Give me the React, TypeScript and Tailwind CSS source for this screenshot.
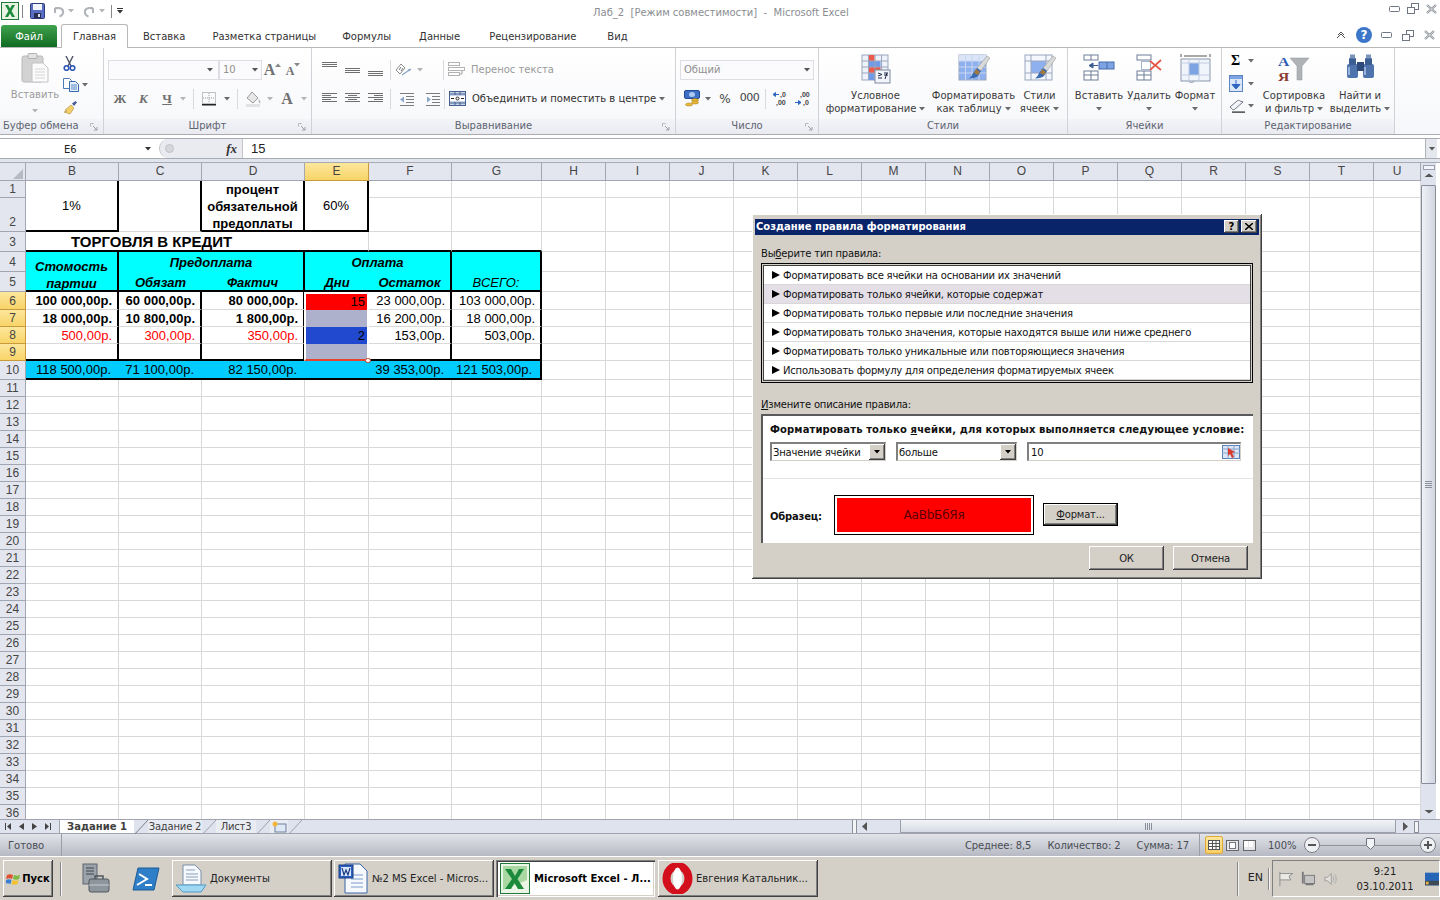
import type { ReactNode } from 'react'

const ui = "font-['DejaVu_Sans',sans-serif] text-[10px]"
const sheetFont = "font-['Liberation_Sans',sans-serif]"
const serifFont = "font-['Liberation_Serif',serif]"

const colLetters = ['B', 'C', 'D', 'E', 'F', 'G', 'H', 'I', 'J', 'K', 'L', 'M', 'N', 'O', 'P', 'Q', 'R', 'S', 'T', 'U']
const colWidths = [26, 93, 83, 103, 64, 83, 90, 64, 64, 64, 64, 64, 64, 64, 64, 64, 64, 64, 64, 64, 47]

function Caret({ color = '#6a6a6a', className = '' }: { color?: string; className?: string }) {
  return (
    <svg width="6" height="4" viewBox="0 0 6 4" className={`inline-block shrink-0 ${className}`}>
      <path d="M0 0h6L3 3.5z" fill={color} />
    </svg>
  )
}

function Launcher() {
  return (
    <svg width="8" height="8" viewBox="0 0 8 8">
      <path d="M0.5 0.5h3M0.5 0.5v3" stroke="#b5b8bf" fill="none" />
      <path d="M3 3l4 4M7 4v3H4" stroke="#9ca0a8" fill="none" />
    </svg>
  )
}

function Sep({ h = 'h-[20px]', ml = '' }: { h?: string; ml?: string }) {
  return <div className={`w-px bg-[#d8dae0] shrink-0 ${h} ${ml}`} />
}

function Cell({ w, children }: { w: string; children?: ReactNode }) {
  return <div className={`${w} h-full flex items-center justify-center shrink-0`}>{children}</div>
}

function Lines({ kind }: { kind: 'left' | 'center' | 'right' }) {
  const rows = [15, 9, 15, 9, 15]
  return (
    <svg width="15" height="11" viewBox="0 0 15 11">
      {rows.map((w, i) => {
        const x = kind === 'left' ? 0 : kind === 'right' ? 15 - w : (15 - w) / 2
        return <rect key={i} x={x} y={i * 2} width={w} height="1" fill="#6f6f6f" />
      })}
    </svg>
  )
}

function VLines({ offset }: { offset: number }) {
  return (
    <svg width="15" height="14" viewBox="0 0 15 14">
      {[0, 1, 2].map((i) => (
        <rect key={i} x="0" y={offset + i * 2} width="15" height="1" fill="#6f6f6f" />
      ))}
    </svg>
  )
}

function Indent({ dir }: { dir: 'l' | 'r' }) {
  return (
    <svg width="15" height="14" viewBox="0 0 15 14">
      {[1, 4, 7, 10, 13].map((y, i) => (
        <rect key={y} x={i === 0 || i === 4 ? 1 : 7} y={y} width={i === 0 || i === 4 ? 14 : 8} height="1" fill="#7d7d7d" />
      ))}
      <path d={dir === 'l' ? 'M1 7.5l4-3v6z' : 'M6 7.5l-4-3v6z'} fill="#8aa6c8" />
    </svg>
  )
}

function ExcelLogo() {
  return (
    <svg width="18" height="18" viewBox="0 0 18 18">
      <rect x="0.5" y="0.5" width="17" height="17" fill="#e8f3e4" stroke="#1f7a3a" />
      <path d="M4 3h3l2 3.5L11 3h3l-3.5 6 3.5 6h-3l-2-3.5L7 15H4l3.5-6z" fill="#1c8a3b" />
    </svg>
  )
}

function SaveIcon() {
  return (
    <svg width="15" height="16" viewBox="0 0 15 16">
      <rect x="0.5" y="0.5" width="14" height="15" rx="1" fill="#5a6fc4" stroke="#2c3a7c" />
      <rect x="3" y="1" width="9" height="6" fill="#f2f4fb" />
      <rect x="4" y="10" width="7" height="5" fill="#2a2f50" />
      <rect x="8" y="11" width="2" height="3" fill="#d8dcf0" />
    </svg>
  )
}

function UndoIcon({ flip }: { flip?: boolean }) {
  return (
    <svg width="13" height="13" viewBox="0 0 13 13" className={flip ? '-scale-x-100' : ''}>
      <path d="M3 8V3M3 3h5M3.5 3.5C7 2 12 3.5 11 8c-.4 1.8-2 3-3.5 3.5" stroke="#b1b4ba" strokeWidth="2" fill="none" />
    </svg>
  )
}

function PasteIcon() {
  return (
    <svg width="28" height="32" viewBox="0 0 28 32">
      <rect x="1" y="3" width="21" height="26" rx="2" fill="#d2d2d2" stroke="#b9b9b9" />
      <rect x="7" y="0.5" width="9" height="5" rx="1" fill="#e3e3e3" stroke="#b0b0b0" />
      <path d="M11 10h11l5 5v14H11z" fill="#fbfbfb" stroke="#c3c3c3" />
      <path d="M14 16h10M14 19h10M14 22h10M14 25h10" stroke="#d4d4d4" />
    </svg>
  )
}

function ScissorsIcon() {
  return (
    <svg width="13" height="15" viewBox="0 0 13 15">
      <path d="M3 0l5 10M10 0L5 10" stroke="#4b5464" strokeWidth="1.4" />
      <circle cx="3.5" cy="12" r="2.3" fill="none" stroke="#2d55b6" strokeWidth="1.6" />
      <circle cx="9.5" cy="12" r="2.3" fill="none" stroke="#2d55b6" strokeWidth="1.6" />
    </svg>
  )
}

function CopyIcon() {
  return (
    <svg width="16" height="14" viewBox="0 0 16 14">
      <path d="M0.5 0.5h6l2 2v8h-8z" fill="#fff" stroke="#4d79b9" />
      <path d="M6.5 3.5h6l3 3v7h-9z" fill="#e8f0fb" stroke="#3569b0" />
      <path d="M8 7h6M8 9h6M8 11h6" stroke="#5d8ac8" />
    </svg>
  )
}

function PainterIcon() {
  return (
    <svg width="16" height="15" viewBox="0 0 16 15">
      <path d="M8 5l3 3-4 6-6-2 3-1-2-1z" fill="#f4d06a" stroke="#a98b37" strokeWidth="0.6" />
      <path d="M9 3.5l3.5-2.5 1.5 1.5-3 3.5z" fill="#4a5f96" />
    </svg>
  )
}

function BordersIcon() {
  return (
    <svg width="15" height="14" viewBox="0 0 15 14">
      <rect x="0.5" y="0.5" width="13" height="11" fill="none" stroke="#8a8a8a" strokeDasharray="1 1" />
      <path d="M7 1v10M1 6h12" stroke="#9a9a9a" strokeDasharray="1 1" />
      <rect x="0" y="12" width="14" height="1.5" fill="#222" />
    </svg>
  )
}

function FillIcon() {
  return (
    <svg width="17" height="16" viewBox="0 0 17 16">
      <path d="M7 1l6 6-5 5-6-5z" fill="#e7e7e7" stroke="#9a9a9a" />
      <path d="M14 8c1 2 2 3 1 4s-2-1-1-4z" fill="#b5b5b5" />
      <rect x="1" y="13" width="14" height="3" fill="#e3e3e3" />
    </svg>
  )
}

function OrientIcon() {
  return (
    <svg width="18" height="14" viewBox="0 0 18 14">
      <path d="M1 7l5-6 4 4-5 6z" fill="none" stroke="#8d8d8d" />
      <path d="M4 7l2-3M6 8l2-3" stroke="#777" />
      <path d="M7 12L16 6" stroke="#88a3c7" strokeWidth="1.2" />
      <path d="M16 6l-3 0 1.5 2.5z" fill="#88a3c7" />
    </svg>
  )
}

function WrapIcon() {
  return (
    <svg width="17" height="15" viewBox="0 0 17 15">
      <rect x="0.5" y="0.5" width="11" height="3" fill="#fff" stroke="#b3b3b3" />
      <rect x="0.5" y="5.5" width="16" height="3" fill="#fff" stroke="#b3b3b3" />
      <rect x="0.5" y="10.5" width="11" height="3" fill="#fff" stroke="#b3b3b3" />
      <path d="M14 9v3h-2" stroke="#a0a0a0" fill="none" />
    </svg>
  )
}

function MergeIcon() {
  return (
    <svg width="17" height="15" viewBox="0 0 17 15">
      <rect x="0.5" y="0.5" width="16" height="14" fill="#c6d3ea" stroke="#45618f" />
      <rect x="1" y="5" width="15" height="5" fill="#fff" />
      <path d="M1 3h15M1 12h15M6 1v3M11 1v3M6 11v3M11 11v3" stroke="#45618f" />
      <path d="M2 7.5h3M12 7.5h3" stroke="#222" />
      <circle cx="8.5" cy="7.5" r="1.5" fill="none" stroke="#222" />
    </svg>
  )
}

function CurrencyIcon() {
  return (
    <svg width="17" height="17" viewBox="0 0 17 17">
      <rect x="0.5" y="0.5" width="15" height="8" rx="1.5" fill="#3d6fc4" stroke="#1f4a94" />
      <ellipse cx="8" cy="4.5" rx="3" ry="2.5" fill="#a9c9f2" />
      <ellipse cx="11" cy="10" rx="3.5" ry="1.5" fill="#e9b93a" stroke="#a47a16" strokeWidth="0.5" />
      <ellipse cx="11" cy="12.5" rx="3.5" ry="1.5" fill="#e9b93a" stroke="#a47a16" strokeWidth="0.5" />
      <ellipse cx="5" cy="14.5" rx="3.5" ry="1.5" fill="#e9b93a" stroke="#a47a16" strokeWidth="0.5" />
    </svg>
  )
}

function DecimalIcon({ inc }: { inc?: boolean }) {
  return (
    <svg width="18" height="17" viewBox="0 0 18 17">
      <text x={inc ? 10 : 7} y="7" fontSize="7" fontWeight="600" fill="#444" fontFamily="Liberation Sans">{inc ? ',0' : ',00'}</text>
      <text x={inc ? 6 : 10} y="15" fontSize="7" fontWeight="600" fill="#444" fontFamily="Liberation Sans">{inc ? ',00' : ',0'}</text>
      <path d={inc ? 'M3 4.5h6M3 4.5L5.5 2.5v4z' : 'M2 12.5h6M8 12.5L5.5 10.5v4z'} stroke="#2f66c4" fill="#2f66c4" />
    </svg>
  )
}

function CondFormatIcon() {
  return (
    <svg width="30" height="30" viewBox="0 0 30 30">
      <rect x="1" y="1" width="26" height="25" fill="#eef2fa" stroke="#9aa6bd" />
      <rect x="7.5" y="1" width="6" height="6" fill="#ef5a4a" />
      <rect x="7.5" y="7" width="12" height="6" fill="#6f9ae8" />
      <rect x="7.5" y="13" width="12" height="6" fill="#ef5a4a" />
      <rect x="7.5" y="19" width="6" height="7" fill="#6f9ae8" />
      <path d="M7.5 1v25M14 1v25M20.5 1v25M1 7h26M1 13h26M1 19h26" stroke="#9aa6bd" />
      <rect x="14" y="16" width="15" height="13" fill="#f2f5fb" stroke="#7e8aa0" />
      <path d="M17 19l4 1.5-4 1.5M17 24h4M23 19l4 0M23 21l4 0M24 25l2-6" stroke="#1e2b45" fill="none" />
    </svg>
  )
}

function Brush() {
  return (
    <g>
      <path d="M29 2l3 2-9 13-4-3z" fill="#d8d9d8" stroke="#8c8c8c" strokeWidth="0.5" />
      <path d="M19 14l4 3-3 5c-1.5 1.5-5 2.5-9 2.5 2-1.500 3-3 4-5.500z" fill="#3a6ab0" />
      <path d="M18 15l4 3-2 3-4-2z" fill="#a3793f" />
    </g>
  )
}

function TableFmtIcon() {
  return (
    <svg width="32" height="28" viewBox="0 0 32 28">
      <rect x="1" y="1" width="27" height="25" fill="#8fb0ee" stroke="#9aa6bd" />
      <rect x="1" y="1" width="27" height="6" fill="#dbe5f7" />
      <path d="M7.5 1v25M14 1v25M21 1v25M1 7h27M1 13h27M1 19h27" stroke="#c9d6ef" />
      <Brush />
    </svg>
  )
}

function CellStyleIcon() {
  return (
    <svg width="32" height="28" viewBox="0 0 32 28">
      <rect x="1" y="1" width="27" height="25" fill="#f4f7fd" stroke="#9aa6bd" />
      <rect x="7" y="7" width="15" height="12" fill="#8fb0ee" />
      <path d="M7 1v25M22 1v25M1 7h27M1 19h27" stroke="#9aa6bd" />
      <Brush />
    </svg>
  )
}

function InsertCellIcon() {
  return (
    <svg width="32" height="27" viewBox="0 0 32 27">
      <rect x="1" y="1" width="14" height="5" fill="#fff" stroke="#6f7d97" />
      <path d="M8 1v5" stroke="#6f7d97" />
      <rect x="16" y="8" width="15" height="7" fill="#7ea3e2" stroke="#466da9" />
      <path d="M24 8v7" stroke="#466da9" />
      <path d="M6 11.5h9M6 11.5l4-2.5v5z" stroke="#3c5f93" fill="#3c5f93" />
      <rect x="1" y="17" width="14" height="9" fill="#fff" stroke="#6f7d97" />
      <path d="M8 17v9M1 21h14" stroke="#6f7d97" />
    </svg>
  )
}

function DeleteCellIcon() {
  return (
    <svg width="27" height="27" viewBox="0 0 27 27">
      <rect x="1" y="1" width="14" height="5" fill="#fff" stroke="#6f7d97" />
      <rect x="5.5" y="7.5" width="9" height="8" fill="#fff" stroke="#466da9" strokeDasharray="1 1" />
      <path d="M14 7l11 9M25 6l-11 10" stroke="#e45745" strokeWidth="1.7" />
      <rect x="1" y="17" width="14" height="9" fill="#fff" stroke="#6f7d97" />
      <path d="M8 17v9M1 21h14" stroke="#6f7d97" />
    </svg>
  )
}

function FormatCellIcon() {
  return (
    <svg width="31" height="30" viewBox="0 0 31 30">
      <path d="M1 0v3M30 0v3M4 2h23" stroke="#555" />
      <rect x="1" y="5" width="29" height="22" fill="#f0f4fb" stroke="#8b97ae" />
      <rect x="9" y="9" width="10" height="12" fill="#7ea3e2" />
      <path d="M9 5v22M19 5v22M1 9h29M1 21h29" stroke="#c1cde3" />
      <path d="M9 27c0 2 5 2 5 0" stroke="#8b97ae" fill="none" />
    </svg>
  )
}

function FillDownIcon() {
  return (
    <svg width="14" height="17" viewBox="0 0 14 17">
      <rect x="0.5" y="0.5" width="13" height="16" fill="#dbe6f8" stroke="#5d85c4" />
      <rect x="1" y="1" width="12" height="3" fill="#7ea3e2" />
      <path d="M7 5v6M3 9.5h8L7 14z" stroke="#2f66c4" fill="#2f66c4" />
    </svg>
  )
}

function EraserIcon() {
  return (
    <svg width="16" height="14" viewBox="0 0 16 14">
      <path d="M1 8l7-6c1-1 2-1 3 0l3 1-8 7c-1 1-2 1-3 0z" fill="#f4f5f8" stroke="#6d7786" />
      <rect x="3" y="12.5" width="13" height="1.2" fill="#222" />
    </svg>
  )
}

function SortIcon() {
  return (
    <svg width="32" height="30" viewBox="0 0 32 30" className={serifFont}>
      <text transform="translate(0 12) scale(1.2 1)" fontSize="13" fontWeight="700" fill="#2f5fb0">A</text>
      <text transform="translate(0 27) scale(1.2 1)" fontSize="13" fontWeight="700" fill="#8c3a34">Я</text>
      <path d="M12 4h19l-7 8v14h-5v-14z" fill="#b0b3b6" stroke="#8f9195" strokeWidth="0.5" />
    </svg>
  )
}

function FindIcon() {
  return (
    <svg width="29" height="26" viewBox="0 0 29 26">
      <rect x="1" y="10" width="11" height="14" rx="2" fill="#4f73ad" />
      <rect x="17" y="10" width="11" height="14" rx="2" fill="#4f73ad" />
      <rect x="3" y="4" width="7" height="7" rx="1" fill="#3c5d92" />
      <rect x="19" y="4" width="7" height="7" rx="1" fill="#3c5d92" />
      <rect x="4" y="0.5" width="5" height="4" fill="#7a93bd" />
      <rect x="20" y="0.5" width="5" height="4" fill="#7a93bd" />
      <rect x="11" y="8" width="7" height="9" fill="#2e4a7a" />
      <path d="M3 13v8M19 13v8" stroke="#b5c8e6" strokeWidth="1.5" />
    </svg>
  )
}

function WindowBtns({ gap }: { gap: string }) {
  return (
    <div className={`flex items-center ${gap}`}>
      <svg width="11" height="6" viewBox="0 0 11 6"><rect x="0.5" y="0.5" width="10" height="5" rx="1" fill="#fff" stroke="#6f7784" /></svg>
      <svg width="12" height="11" viewBox="0 0 12 11">
        <rect x="4.5" y="0.5" width="7" height="6" fill="#fff" stroke="#6f7784" />
        <rect x="0.5" y="4.5" width="7" height="6" fill="#fff" stroke="#6f7784" />
      </svg>
      <svg width="11" height="10" viewBox="0 0 11 10"><path d="M1 1l9 8M10 1L1 9" stroke="#808790" strokeWidth="2.2" /><path d="M1 1l9 8M10 1L1 9" stroke="#fff" strokeWidth="0.7" /></svg>
    </div>
  )
}

function BigButton({ w, icon, lines, caret }: { w: string; icon: ReactNode; lines: string[]; caret?: boolean }) {
  return (
    <div className={`${w} shrink-0 flex flex-col items-center pt-[6px]`}>
      <div className="h-[32px] flex items-start justify-center">{icon}</div>
      <div className="mt-[3px] leading-[13px] text-center text-[#3a3a3a] whitespace-nowrap">
        {lines.map((l, i) => (
          <div key={l} className="flex items-center justify-center gap-[3px]">
            {l}
            {caret && i === lines.length - 1 && <Caret />}
          </div>
        ))}
        {lines.length === 1 && (
          <div className="flex justify-center h-[13px] items-center">
            <Caret />
          </div>
        )}
      </div>
    </div>
  )
}

function Group({ w, label, launcher, labelCls = '', children }: { w: string; label: string; launcher?: boolean; labelCls?: string; children: ReactNode }) {
  return (
    <div className={`${w} shrink-0 h-full flex flex-col border-r border-[#d0d2d8]`}>
      <div className="h-[71px] flex">{children}</div>
      <div className={`h-[15px] relative flex items-center justify-center pb-[2px] bg-gradient-to-b from-[#f3f4f8] to-[#e9ebf1] text-[#5e6470] ${labelCls}`}>
        <span>{label}</span>
        {launcher && (
          <span className="absolute right-[5px] top-[4px] flex">
            <Launcher />
          </span>
        )}
      </div>
    </div>
  )
}

function Ribbon() {
  const comboCls = 'bg-[#fbfbfd] border border-[#dcdee3] h-[20px] flex items-center justify-between text-[#909090]'
  return (
    <div className="h-[87px] flex bg-gradient-to-b from-white to-[#f6f7fa] border-t border-[#b8b8b8]">
      <Group w="w-[104px]" label="Буфер обмена" launcher labelCls="justify-start pl-[3px]">
        <div className="w-[60px] flex flex-col items-center pt-[5px] pl-[10px]">
          <PasteIcon />
          <span className="mt-[3px] leading-[13px] text-[#9b9b9b]">Вставить</span>
          <span className="mt-[2px]"><Caret color="#b5b5b5" /></span>
        </div>
        <div className="flex flex-col pl-[3px] pt-[5px]">
          <div className="h-[21px] flex items-center"><ScissorsIcon /></div>
          <div className="h-[22px] flex items-center gap-[3px]"><CopyIcon /><Caret /></div>
          <div className="h-[22px] flex items-center"><PainterIcon /></div>
        </div>
      </Group>

      <Group w="w-[208px]" label="Шрифт" launcher>
        <div className="pt-[11px] pl-[4px] flex flex-col gap-[8px]">
          <div className="h-[21px] flex items-center">
            <div className={`${comboCls} w-[111px] justify-end pr-[5px]`}><Caret color="#555" /></div>
            <div className={`${comboCls} w-[43px] px-[3px]`}>10<Caret color="#555" /></div>
            <Cell w="w-[21px]">
              <span className={`${serifFont} font-bold text-[16px] text-[#707070]`}>A</span>
              <Caret color="#888" className="rotate-180 -mt-[9px]" />
            </Cell>
            <Cell w="w-[20px]">
              <span className={`${serifFont} font-bold text-[12px] text-[#707070] mt-[3px]`}>A</span>
              <Caret color="#888" className="-mt-[9px]" />
            </Cell>
          </div>
          <div className="h-[21px] flex items-center text-[#707070] text-[13px] font-bold">
            <Cell w="w-[24px]"><span className={serifFont}>Ж</span></Cell>
            <Cell w="w-[23px]"><span className={`${serifFont} italic`}>К</span></Cell>
            <Cell w="w-[24px]"><span className={`${serifFont} underline`}>Ч</span></Cell>
            <Cell w="w-[8px]"><Caret color="#b5b5b5" /></Cell>
            <Sep ml="ml-[6px]" />
            <Cell w="w-[30px]"><BordersIcon /></Cell>
            <Cell w="w-[6px]"><Caret /></Cell>
            <Sep ml="ml-[7px]" />
            <Cell w="w-[30px]"><FillIcon /></Cell>
            <Cell w="w-[4px]"><Caret color="#b5b5b5" /></Cell>
            <Cell w="w-[30px]"><span className={`${serifFont} text-[16px]`}>A</span></Cell>
            <Cell w="w-[4px]"><Caret color="#b5b5b5" /></Cell>
          </div>
        </div>
      </Group>

      <Group w="w-[364px]" label="Выравнивание" launcher>
        <div className="pt-[11px] pl-[6px] flex flex-col gap-[8px]">
          <div className="h-[21px] flex items-center">
            <Cell w="w-[23px]"><div className="-mt-[5px]"><VLines offset={2} /></div></Cell>
            <Cell w="w-[23px]"><VLines offset={5} /></Cell>
            <Cell w="w-[23px]"><div className="mt-[2px]"><VLines offset={7} /></div></Cell>
            <Sep ml="ml-[3px]" />
            <Cell w="w-[26px]"><OrientIcon /></Cell>
            <Cell w="w-[5px]"><Caret color="#b5b5b5" /></Cell>
            <Sep ml="ml-[21px]" />
            <Cell w="w-[24px]"><WrapIcon /></Cell>
            <span className="text-[#9a9a9a] ml-[3px]">Перенос текста</span>
          </div>
          <div className="h-[21px] flex items-center">
            <Cell w="w-[23px]"><Lines kind="left" /></Cell>
            <Cell w="w-[23px]"><Lines kind="center" /></Cell>
            <Cell w="w-[23px]"><Lines kind="right" /></Cell>
            <Sep ml="ml-[3px]" />
            <Cell w="w-[31px]"><Indent dir="l" /></Cell>
            <Cell w="w-[21px]"><Indent dir="r" /></Cell>
            <div className="w-px" />
            <Sep />
            <Cell w="w-[24px]"><MergeIcon /></Cell>
            <span className="text-[#303030] ml-[3px] whitespace-nowrap">Объединить и поместить в центре</span>
            <Caret className="ml-[3px]" />
          </div>
        </div>
      </Group>

      <Group w="w-[143px]" label="Число" launcher>
        <div className="pt-[11px] pl-[4px] flex flex-col gap-[8px]">
          <div className="h-[21px] flex items-center">
            <div className={`${comboCls} w-[134px] px-[3px]`}>Общий<Caret color="#555" /></div>
          </div>
          <div className="h-[21px] flex items-center text-[#444]">
            <Cell w="w-[24px]"><CurrencyIcon /></Cell>
            <Cell w="w-[8px]"><Caret /></Cell>
            <Cell w="w-[26px]"><span className="text-[12px]">%</span></Cell>
            <Cell w="w-[23px]"><span className="text-[11px] tracking-[-0.5px]">000</span></Cell>
            <Sep ml="ml-[4px]" />
            <Cell w="w-[26px]"><DecimalIcon inc /></Cell>
            <Cell w="w-[20px]"><DecimalIcon /></Cell>
          </div>
        </div>
      </Group>

      <Group w="w-[249px]" label="Стили">
        <div className="flex pl-[3px]">
          <BigButton w="w-[107px]" icon={<CondFormatIcon />} lines={['Условное', 'форматирование']} caret />
          <BigButton w="w-[89px]" icon={<TableFmtIcon />} lines={['Форматировать', 'как таблицу']} caret />
          <BigButton w="w-[43px]" icon={<CellStyleIcon />} lines={['Стили', 'ячеек']} caret />
        </div>
      </Group>

      <Group w="w-[154px]" label="Ячейки">
        <div className="flex pl-[5px]">
          <BigButton w="w-[52px]" icon={<InsertCellIcon />} lines={['Вставить']} />
          <BigButton w="w-[48px]" icon={<DeleteCellIcon />} lines={['Удалить']} />
          <BigButton w="w-[44px]" icon={<FormatCellIcon />} lines={['Формат']} />
        </div>
      </Group>

      <Group w="w-[173px]" label="Редактирование">
        <div className="flex">
          <div className="w-[38px] flex flex-col pl-[7px] pt-[2px]">
            <div className="h-[22px] flex items-center gap-[8px] pl-[2px]">
              <span className={`${serifFont} text-[14px] font-bold leading-none`}>Σ</span>
              <Caret />
            </div>
            <div className="h-[23px] flex items-center gap-[5px]"><FillDownIcon /><Caret /></div>
            <div className="h-[22px] flex items-center gap-[3px]"><EraserIcon /><Caret /></div>
          </div>
          <BigButton w="w-[68px]" icon={<SortIcon />} lines={['Сортировка', 'и фильтр']} caret />
          <BigButton w="w-[64px]" icon={<FindIcon />} lines={['Найти и', 'выделить']} caret />
        </div>
      </Group>
    </div>
  )
}

function FormulaBar() {
  return (
    <div className="h-[21px] mt-[3px] flex items-stretch bg-white border-y border-[#a9abb2] pr-[3px] shrink-0">
      <div className="w-[159px] flex items-center justify-between pr-[8px] pt-px text-[#222]">
        <span className="pl-[64px]">E6</span>
        <Caret color="#333" />
      </div>
      <div className="w-[84px] bg-[#e9ebf0] border-r border-[#c4c6cc] flex items-center justify-between rounded-l-[10px] pl-[5px] pr-[5px] border-l border-[#b5b7bd]">
        <span className="w-[9px] h-[9px] rounded-full bg-[#d5d7dc] border border-[#bfc1c7]" />
        <span className={`${serifFont} italic font-bold text-[13px] text-[#333]`}>fx</span>
      </div>
      <div className={`${sheetFont} flex-1 flex items-center pl-[8px] text-[#222] text-[13px]`}>15</div>
      <div className="w-[12px] bg-[#e4e7ee] border-l border-[#b0b2b8] flex items-center justify-center"><Caret color="#555" /></div>
    </div>
  )
}

const headCell = 'p-0 border-r border-b border-[#a2a6b0] bg-[#e3e6ee] text-center font-normal text-[12px] leading-none text-[#454545]'
const headCellActive = 'p-0 border-r border-b border-[#c99a3c] bg-gradient-to-b from-[#fde79b] to-[#f8d468] text-center font-normal text-[12px] leading-none text-[#454545]'
const grid = 'p-0 border-r border-b border-[#d8d8d8]'
const thickR = 'border-r-2 border-r-black'
const thickB = 'border-b-2 border-b-black'

function Blanks({ n, extra = '' }: { n: number; extra?: string }) {
  return (
    <>
      {Array.from({ length: n }, (_, i) => (
        <td key={i} className={`${grid} ${extra}`} />
      ))}
    </>
  )
}

function RowHead({ n, active, className = '' }: { n: number; active?: boolean; className?: string }) {
  return <th className={`${active ? headCellActive : headCell} ${className}`}>{n}</th>
}

function Money({ v, className = '' }: { v: string; className?: string }) {
  return <td className={`${grid} ${className} text-right pr-[5px] whitespace-nowrap leading-none text-[13px]`}>{v}</td>
}

const cyan = 'bg-[#00ffff] font-bold italic text-[13px] text-center whitespace-nowrap'

function SheetTable() {
  const dataRows = [
    { n: 6, h: 'h-[18px]', b: '100 000,00р.', c: '60 000,00р.', d: '80 000,00р.', f: '23 000,00р.', g: '103 000,00р.', cls: 'font-bold', e: 'bg-[#ff0000]', ev: '15' },
    { n: 7, h: 'h-[17px]', b: '18 000,00р.', c: '10 800,00р.', d: '1 800,00р.', f: '16 200,00р.', g: '18 000,00р.', cls: 'font-bold', e: 'bg-[#adb1cc]', ev: '' },
    { n: 8, h: 'h-[17px]', b: '500,00р.', c: '300,00р.', d: '350,00р.', f: '153,00р.', g: '503,00р.', cls: 'text-[#ff0000]', e: 'bg-[#2149d0]', ev: '2' },
    { n: 9, h: 'h-[17px]', b: '', c: '', d: '', f: '', g: '', cls: '', e: 'bg-[#adb1cc]', ev: '' },
  ]
  return (
    <table className={`${sheetFont} border-separate border-spacing-0 table-fixed w-[1421px] text-black`}>
      <colgroup>
        {colWidths.map((w, i) => (
          <col key={i} style={{ width: w }} />
        ))}
      </colgroup>
      <tbody>
        <tr className="h-[18px]">
          <th className={`${headCell} relative`}>
            <svg width="10" height="10" viewBox="0 0 10 10" className="absolute right-[2px] bottom-[1px]"><path d="M10 0v10H0z" fill="#b6bac3" /></svg>
          </th>
          {colLetters.map((l) => (
            <th key={l} className={`${l === 'E' ? headCellActive : headCell} pb-px`}>{l}</th>
          ))}
        </tr>

        <tr className="h-[17px]">
          <RowHead n={1} />
          <td rowSpan={2} className={`${grid} ${thickR} ${thickB} text-center text-[13px] leading-none`}>1%</td>
          <td rowSpan={2} className={`${grid} ${thickR}`} />
          <td rowSpan={2} className={`${grid} ${thickR} ${thickB} text-center text-[13px] font-bold leading-[17px] align-top`}>
            <div className="h-[49px]">процент обязательной предоплаты</div>
          </td>
          <td rowSpan={2} className={`${grid} ${thickR} ${thickB} text-center text-[13px] leading-none`}>60%</td>
          <Blanks n={16} />
        </tr>
        <tr className="h-[34px]">
          <RowHead n={2} className="align-bottom pb-[3px]" />
          <Blanks n={16} />
        </tr>
        <tr className="h-[20px]">
          <RowHead n={3} />
          <td colSpan={4} className={`${grid} ${thickB} text-[15px] leading-none font-bold pl-[45px] whitespace-nowrap`}>ТОРГОВЛЯ В КРЕДИТ</td>
          <td className={`${grid} ${thickB}`} />
          <td className={`${grid} ${thickB}`} />
          <Blanks n={14} />
        </tr>
        <tr className="h-[20px]">
          <RowHead n={4} />
          <td rowSpan={2} className={`p-0 border-b-2 border-b-black ${thickR} ${cyan} align-bottom leading-[17px] overflow-hidden`}>
            <div className="translate-y-[2px] h-[34px]">Стомость<br />партии</div>
          </td>
          <td colSpan={2} className={`p-0 ${thickR} ${cyan} align-middle leading-[15px]`}>Предоплата</td>
          <td colSpan={2} className={`p-0 ${thickR} ${cyan} align-middle leading-[15px]`}>Оплата</td>
          <td className={`p-0 ${thickR} bg-[#00ffff]`} />
          <Blanks n={14} />
        </tr>
        <tr className="h-[20px]">
          <RowHead n={5} />
          <td className={`p-0 ${thickB} ${cyan} align-bottom leading-[14px]`}>Обязат</td>
          <td className={`p-0 ${thickB} ${thickR} ${cyan} align-bottom leading-[14px]`}>Фактич</td>
          <td className={`p-0 ${thickB} ${cyan} align-bottom leading-[14px]`}>Дни</td>
          <td className={`p-0 ${thickB} ${thickR} ${cyan} align-bottom leading-[14px]`}>Остаток</td>
          <td className={`p-0 ${thickB} ${thickR} bg-[#00ffff] italic text-[13px] text-center align-bottom leading-[14px] whitespace-nowrap`}>ВСЕГО:</td>
          <Blanks n={14} />
        </tr>

        {dataRows.map((r) => (
          <tr key={r.n} className={r.h}>
            <RowHead n={r.n} active />
            <Money v={r.b} className={`${thickR} ${r.cls} ${r.n === 9 ? thickB : ''}`} />
            <Money v={r.c} className={`${thickR} ${r.cls} ${r.n === 9 ? thickB : ''}`} />
            <Money v={r.d} className={`${thickR} ${r.cls} ${r.n === 9 ? thickB : ''}`} />
            <td className={`p-0 ${thickR} ${r.e} text-right pr-[2px] text-[13px] leading-none ${r.n === 9 ? thickB : ''}`}>{r.ev}</td>
            <td className={`${grid} ${thickR} text-right pr-[5px] whitespace-nowrap leading-none text-[13px] ${r.n === 9 ? thickB : ''}`}>{r.f}</td>
            <td className={`${grid} ${thickR} text-right pr-[5px] whitespace-nowrap leading-none text-[13px] ${r.n === 9 ? thickB : ''}`}>{r.g}</td>
            <Blanks n={14} />
          </tr>
        ))}

        <tr className="h-[19px] text-[13px]">
          <RowHead n={10} />
          {['118 500,00р.', '71 100,00р.', '82 150,00р.', '', '39 353,00р.', '121 503,00р.'].map((v, i) => (
            <td key={i} className={`p-0 bg-[#00ccff] ${thickB} text-right pr-[8px] whitespace-nowrap leading-none ${i === 5 ? thickR : ''}`}>{v}</td>
          ))}
          <Blanks n={14} />
        </tr>

        {Array.from({ length: 26 }, (_, i) => (
          <tr key={i} className="h-[17px]">
            <RowHead n={i + 11} />
            <Blanks n={20} />
          </tr>
        ))}
      </tbody>
    </table>
  )
}

function VScroll() {
  return (
    <div className="w-[19px] pr-[4px] shrink-0 bg-white">
      <div className="h-full bg-[#dfe3ee] flex flex-col items-center">
        <div className="w-[12px] h-[5px] mt-[2px] border border-[#9aa0ad] bg-[#f2f4f9]" />
        <Caret color="#555" className="rotate-180 mt-[3px] scale-x-150" />
        <div className="w-full h-[599px] mt-[8px] border border-[#868c99] rounded-[1px] bg-gradient-to-r from-[#eff1f6] to-[#d2d6e0] flex items-center justify-center">
          <div className="w-[7px] h-[7px] bg-[repeating-linear-gradient(#8a8f9a_0,#8a8f9a_1px,transparent_1px,transparent_2px)]" />
        </div>
        <Caret color="#555" className="mt-[26px] scale-x-150" />
      </div>
    </div>
  )
}

function TabEdge({ dark }: { dark?: boolean }) {
  return (
    <svg width="14" height="15" viewBox="0 0 14 15" className="shrink-0">
      <path d="M0 15L14 0" stroke={dark ? '#7a7f8b' : '#9ba0ac'} />
    </svg>
  )
}

function SheetTabs() {
  return (
    <div className="h-[15px] flex border-y border-[#a0a4ae] bg-[#dfe3ee] text-[#3f3f3f] shrink-0">
      <div className="w-[60px] flex items-center pl-[5px] gap-[8px] border-r border-[#a0a4ae]">
        <svg width="6" height="7" viewBox="0 0 6 7"><path d="M0 0h1v7H0zM6 0v7L2 3.5z" fill="#444" /></svg>
        <svg width="5" height="7" viewBox="0 0 5 7"><path d="M5 0v7L0 3.5z" fill="#444" /></svg>
        <svg width="5" height="7" viewBox="0 0 5 7"><path d="M0 0v7l5-3.5z" fill="#444" /></svg>
        <svg width="6" height="7" viewBox="0 0 6 7"><path d="M0 0v7l4-3.5zM5 0h1v7H5z" fill="#444" /></svg>
      </div>
      <div className="w-[74px] bg-white font-bold flex items-center justify-center whitespace-nowrap">Задание 1</div>
      <TabEdge dark />
      <div className="w-[54px] bg-[#e9ecf3] flex items-center justify-center whitespace-nowrap tracking-[-0.2px]">Задание 2</div>
      <TabEdge />
      <div className="w-[40px] bg-[#e9ecf3] flex items-center justify-center tracking-[-0.2px]">Лист3</div>
      <TabEdge />
      <div className="w-[18px] bg-[#e9ecf3] flex items-center justify-center">
        <svg width="15" height="12" viewBox="0 0 15 12">
          <rect x="3" y="3" width="11" height="8" fill="#dfe8f5" stroke="#6d7f9c" />
          <circle cx="3" cy="3" r="2.5" fill="#f3b63a" />
        </svg>
      </div>
      <TabEdge />
      <div className="w-[550px]" />
      <div className="w-[5px] bg-[#f3f4f7] border-x border-[#8a8f9a]" />
      <div className="flex-1 flex items-center ml-[5px]">
        <svg width="5" height="9" viewBox="0 0 5 9"><path d="M5 0v9L0 4.5z" fill="#555" /></svg>
        <div className="w-[496px] h-full ml-[33px] bg-gradient-to-b from-[#f2f4f8] to-[#d6dae3] border-x border-b border-[#9aa0ad] flex items-center justify-center">
          <div className="w-[7px] h-[7px] bg-[repeating-linear-gradient(90deg,#8a8f9a_0,#8a8f9a_1px,transparent_1px,transparent_2px)]" />
        </div>
        <svg width="5" height="9" viewBox="0 0 5 9" className="ml-[7px]"><path d="M0 0v9l5-4.5z" fill="#555" /></svg>
        <div className="w-[5px] h-[12px] ml-[6px] bg-[#f3f4f7] border border-[#8a8f9a]" />
      </div>
    </div>
  )
}

function StatusBar() {
  return (
    <div className="h-[22px] shrink-0 flex items-center bg-gradient-to-b from-[#e2e4ea] to-[#b6b9c3] text-[#4a4d55]">
      <div className="w-[62px] h-full pl-[8px] flex items-center border-r border-[#9b9ea7]">Готово</div>
      <div className="flex-1" />
      <span className="tracking-[-0.1px]">Среднее: 8,5</span>
      <span className="ml-[16px] tracking-[-0.1px]">Количество: 2</span>
      <span className="ml-[16px] tracking-[-0.1px]">Сумма: 17</span>
      <div className="h-full w-px bg-[#9b9ea7] ml-[10px]" />
      <div className="w-[18px] h-[18px] ml-[5px] rounded-[2px] border border-[#e0a93a] bg-gradient-to-b from-[#fde79b] to-[#f8cf62] flex items-center justify-center">
        <svg width="12" height="10" viewBox="0 0 12 10"><rect x="0.5" y="0.5" width="11" height="9" fill="#fff" stroke="#555" /><path d="M4.5 0v10M8 0v10M0 3.5h12M0 6.5h12" stroke="#555" /></svg>
      </div>
      <div className="w-[19px] flex justify-center">
        <svg width="13" height="11" viewBox="0 0 13 11"><rect x="0.5" y="0.5" width="12" height="10" fill="#e6e7ec" stroke="#666" /><rect x="3.5" y="2.5" width="6" height="6" fill="#fff" stroke="#777" /></svg>
      </div>
      <div className="w-[15px] flex justify-center">
        <svg width="13" height="11" viewBox="0 0 13 11"><rect x="0.5" y="0.5" width="12" height="10" fill="#e6e7ec" stroke="#666" /><rect x="1" y="1" width="4" height="6" fill="#fff" /><rect x="6" y="1" width="4" height="6" fill="#fff" /></svg>
      </div>
      <span className="ml-[11px] w-[35px]">100%</span>
      <div className="relative w-[132px] h-full flex items-center ml-[1px]">
        <div className="w-[16px] h-[16px] rounded-full border border-[#7c7f88] bg-[#eef0f4] flex items-center justify-center shrink-0">
          <div className="w-[8px] h-[2px] bg-[#555]" />
        </div>
        <div className="flex-1 h-[1px] bg-[#8f929a]" />
        <div className="w-[16px] h-[16px] rounded-full border border-[#7c7f88] bg-[#eef0f4] flex items-center justify-center shrink-0 relative">
          <div className="w-[8px] h-[2px] bg-[#555]" />
          <div className="absolute w-[2px] h-[8px] bg-[#555]" />
        </div>
        <svg width="9" height="12" viewBox="0 0 9 12" className="absolute left-[62px] top-[4px]"><path d="M0.5 0.5h8v7L4.5 11.5 0.5 7.5z" fill="#f3f4f7" stroke="#6f727a" /></svg>
      </div>
      <div className="w-[4px]" />
    </div>
  )
}

const raised = 'shadow-[inset_-1px_-1px_#404040,inset_1px_1px_#fff,inset_-2px_-2px_#808080,inset_2px_2px_#d4d0c8]'
const sunken = 'shadow-[inset_1px_1px_#808080,inset_2px_2px_#404040,inset_-1px_-1px_#fff,inset_-2px_-2px_#d4d0c8]'

function TaskButton({ w, active, icon, label }: { w: string; active?: boolean; icon: ReactNode; label: string }) {
  return (
    <div className={`${w} h-[37px] shrink-0 flex items-center gap-[3px] pl-[3px] ${active ? `bg-white font-bold text-black ${sunken}` : `bg-[#d4d0c8] text-[#222] ${raised}`}`}>
      <div className="w-[32px] flex justify-center shrink-0">{icon}</div>
      <span className="whitespace-nowrap">{label}</span>
    </div>
  )
}

function Taskbar() {
  return (
    <div className="h-[44px] shrink-0 bg-[#d4d0c8] border-t border-white flex items-center pl-[3px] text-[#222]">
      <div className={`w-[50px] h-[37px] ${raised} flex items-center justify-center gap-[1px] font-bold text-black shrink-0`}>
        <svg width="15" height="14" viewBox="0 0 15 14">
          <path d="M1 3c2-1 4-1 6 0l-1 4c-2-1-4-1-6 0z" fill="#e0502f" />
          <path d="M8 3c2 1 4 1 6 0l-1 4c-2 1-4 1-6 0z" fill="#7eb83d" />
          <path d="M0 8c2-1 4-1 5.5 0L4.5 12c-2-1-4-1-5.5 0z" fill="#3a7fd4" />
          <path d="M6.5 8c2 1 4 1 6 0l-1 4c-2 1-4 1-6 0z" fill="#f2c22f" />
        </svg>
        Пуск
      </div>
      <div className="w-[2px] h-[34px] ml-[7px] bg-[#f5f5f5] border-l border-[#888] shrink-0" />
      <div className="w-[32px] ml-[18px] flex justify-center shrink-0">
        <svg width="30" height="32" viewBox="0 0 30 32">
          <rect x="2" y="1" width="14" height="20" fill="#9da3ab" stroke="#5f656e" />
          <path d="M5 5h8M5 8h8M5 11h8" stroke="#3f444b" />
          <rect x="8" y="16" width="20" height="13" rx="2" fill="#8d959d" stroke="#50565e" />
          <path d="M14 16v-3h8v3" stroke="#50565e" fill="none" strokeWidth="1.5" />
          <path d="M8 22h20" stroke="#c9cdd2" />
        </svg>
      </div>
      <div className="w-[32px] ml-[18px] flex justify-center shrink-0">
        <svg width="28" height="24" viewBox="0 0 28 24">
          <path d="M6 1h21l-5 22H1z" fill="#2e7fc8" stroke="#1b5c98" />
          <path d="M7 7l8 5-10 6" stroke="#fff" strokeWidth="2" fill="none" />
          <path d="M13 18h7" stroke="#fff" strokeWidth="2" />
        </svg>
      </div>
      <div className="w-[10px] shrink-0" />
      <TaskButton w="w-[160px]" label="Документы" icon={
        <svg width="32" height="30" viewBox="0 0 32 30">
          <path d="M8 1h12l6 6v14H8z" fill="#f5f8fc" stroke="#7d8fa8" />
          <path d="M11 6h9M11 10h12M11 13h12M11 16h12" stroke="#8ca0bb" />
          <path d="M1 21l30 0-5 7H8z" fill="#9fd8f2" stroke="#4f9bc6" />
        </svg>
      } />
      <div className="w-[2px] shrink-0" />
      <TaskButton w="w-[160px]" label="№2 MS Excel - Micros..." icon={
        <svg width="30" height="31" viewBox="0 0 30 31">
          <path d="M7 1h15l7 7v22H7z" fill="#f5f8fc" stroke="#3a64a8" />
          <path d="M13 12h12M13 16h12M13 20h12M13 24h12" stroke="#7d9ccc" />
          <rect x="1" y="2" width="14" height="13" fill="#2c5fc0" stroke="#1b3c80" />
          <rect x="3" y="4" width="10" height="9" fill="#d9e6fb" />
          <path d="M4 5l2 7 2-5 2 5 2-7" stroke="#1b3c80" strokeWidth="1.2" fill="none" />
        </svg>
      } />
      <div className="w-[2px] shrink-0" />
      <TaskButton w="w-[159px]" active label="Microsoft Excel - Л..." icon={
        <svg width="30" height="31" viewBox="0 0 30 31">
          <rect x="0.5" y="0.5" width="29" height="30" fill="#eaf5e5" stroke="#1f7a3a" />
          <path d="M3 3h24v14L3 27z" fill="#a9d8a2" />
          <path d="M5 6h6l4 7 4-7h5l-6.5 10L24 26h-6l-3.5-6L11 26H5l7-10z" fill="#1c8a3b" />
        </svg>
      } />
      <div className="w-[3px] shrink-0" />
      <TaskButton w="w-[160px]" label="Евгения Катальник..." icon={
        <svg width="31" height="31" viewBox="0 0 31 31">
          <ellipse cx="15.5" cy="15.5" rx="11" ry="12.5" fill="none" stroke="#d40f1c" strokeWidth="8" />
          <ellipse cx="15.5" cy="15.5" rx="4.5" ry="11" fill="#fff" />
        </svg>
      } />
      <div className="flex-1" />
      <div className="w-[2px] h-[34px] bg-[#f5f5f5] border-l border-[#888]" />
      <span className="ml-[9px] text-[11px]">EN</span>
      <div className="w-[2px] h-[22px] ml-[5px] bg-[#f5f5f5] border-l border-[#888]" />
      <div className="w-[168px] h-[37px] ml-[2px] border border-[#808080] border-b-white border-r-white flex items-center">
        <svg width="16" height="16" viewBox="0 0 16 16" className="ml-[6px]"><path d="M1 0v16M1 2h14l-4 3 2 4H1" fill="#eceae5" stroke="#8a8a8a" /></svg>
        <svg width="16" height="17" viewBox="0 0 16 17" className="ml-[8px]"><rect x="4" y="5" width="11" height="9" fill="#c4c4c4" stroke="#777" /><path d="M2 1v13M5 15h9" stroke="#777" strokeWidth="2" /></svg>
        <svg width="15" height="14" viewBox="0 0 15 14" className="ml-[8px]"><path d="M1 5h3l4-4v12l-4-4H1z" fill="#e3e1dc" stroke="#999" /><path d="M10 4c1 2 1 4 0 6M12 2c2 3 2 7 0 10" stroke="#aaa" fill="none" /></svg>
        <div className="w-[74px] ml-[14px] text-center leading-[15px] text-[#222]">
          <div>9:21</div>
          <div>03.10.2011</div>
        </div>
        <svg width="16" height="14" viewBox="0 0 16 14" className="ml-[6px]"><rect width="16" height="14" fill="#2766b6" /><rect y="9" width="16" height="5" fill="#3f4a57" /><rect x="1" y="10" width="3" height="3" fill="#e3b341" /></svg>
      </div>
    </div>
  )
}

function ClassicSelect({ w, label }: { w: string; label: string }) {
  return (
    <div className={`${w} h-[19px] border-t-2 border-l-2 border-[#808080] border-b border-r border-b-[#d4d0c8] border-r-[#d4d0c8] flex items-center justify-between bg-white`}>
      <span className="pl-[1px] whitespace-nowrap tracking-[-0.2px]">{label}</span>
      <div className={`w-[16px] h-full bg-[#d4d0c8] ${raised} flex items-center justify-center`}>
        <Caret color="#000" />
      </div>
    </div>
  )
}

function ClassicButton({ children, strong }: { children: ReactNode; strong?: boolean }) {
  return (
    <div className={`w-[75px] ${strong ? 'h-[23px] border border-black' : 'h-[24px]'} ${raised} flex items-center justify-center bg-[#d4d0c8] text-[#222]`}>
      {children}
    </div>
  )
}

const ruleTypes = [
  'Форматировать все ячейки на основании их значений',
  'Форматировать только ячейки, которые содержат',
  'Форматировать только первые или последние значения',
  'Форматировать только значения, которые находятся выше или ниже среднего',
  'Форматировать только уникальные или повторяющиеся значения',
  'Использовать формулу для определения форматируемых ячеек',
]

function Dialog() {
  return (
    <div className={`absolute left-[752px] top-[214px] w-[510px] h-[365px] bg-[#d4d0c8] ${raised} p-[3px] text-[#111]`}>
      <div className="h-[16px] mt-[2px] pb-px bg-[#0a246a] flex items-center justify-between pl-[1px] pr-[2px] text-white font-bold">
        <span>Создание правила форматирования</span>
        <div className="flex gap-[2px]">
          <div className={`w-[15px] h-[13px] bg-[#d4d0c8] ${raised} text-black flex items-center justify-center`}>?</div>
          <div className={`w-[16px] h-[13px] bg-[#d4d0c8] ${raised} flex items-center justify-center`}>
            <svg width="8" height="7" viewBox="0 0 8 7"><path d="M0 0l8 7M8 0L0 7" stroke="#000" strokeWidth="1.5" /></svg>
          </div>
        </div>
      </div>
      <div className="pl-[6px] pr-[6px] tracking-[-0.2px]">
        <div className="mt-[12px] h-[13px] leading-[13px]">Вы<span className="underline">б</span>ерите тип правила:</div>
        <div className="mt-[3px] w-[492px] border border-black p-[1px] bg-[#d4d0c8]">
          <div className="border border-[#404040] bg-white">
            {ruleTypes.map((t, i) => (
              <div key={t} className={`h-[19px] flex items-center pl-[8px] border-b border-[#d8d8d8] ${i === 1 ? 'bg-[#e4dfe7]' : ''}`}>
                <svg width="8" height="8" viewBox="0 0 8 8" className="mr-[3px]"><path d="M0 0l8 4-8 4z" fill="#000" /></svg>
                <span className="whitespace-nowrap">{t}</span>
              </div>
            ))}
          </div>
        </div>
        <div className="mt-[15px] h-[13px] leading-[13px]"><span className="underline">И</span>змените описание правила:</div>
        <div className="mt-[3px] w-[492px] h-[129px] bg-white border-t-2 border-l-2 border-[#5a5a5a]">
          <div className="pl-[7px] pt-[7px] h-[11px] font-bold whitespace-nowrap leading-[13px] tracking-[0.13px] box-content">
            Форматировать только <span className="underline">я</span>чейки, для которых выполняется следующее условие:
          </div>
          <div className="flex pl-[7px] mt-[8px]">
            <ClassicSelect w="w-[116px]" label="Значение ячейки" />
            <div className="w-[10px]" />
            <ClassicSelect w="w-[121px]" label="больше" />
            <div className="w-[10px]" />
            <div className="w-[214px] h-[19px] border-t-2 border-l-2 border-[#808080] border-b border-r border-b-[#d4d0c8] border-r-[#d4d0c8] flex items-center justify-between bg-white">
              <span className="pl-[2px]">10</span>
              <svg width="18" height="14" viewBox="0 0 18 14">
                <rect x="0.5" y="0.5" width="17" height="13" fill="#dbe6f6" stroke="#5a7fb5" />
                <path d="M0 4h18M0 8h18M6 0v14M12 0v14" stroke="#8aa5cc" />
                <path d="M6 3l7 4-3 1 2 4-2 1-2-4-2 2z" fill="#d93a2e" />
              </svg>
            </div>
          </div>
          <div className="h-px bg-[#e4e4e4] mt-[17px]" />
          <div className="flex pl-[7px] pt-[16px]">
            <span className="font-bold w-[64px] mt-[14px] whitespace-nowrap">Образец:</span>
            <div className="w-[200px] h-[40px] border border-black p-[2px] bg-white">
              <div className="w-full h-full bg-[#ff0000] flex items-center justify-center text-[#5a0000] text-[12px]">АаВbБбЯя</div>
            </div>
            <div className="ml-[9px] mt-[8px]">
              <ClassicButton strong><span><span className="underline">Ф</span>ормат...</span></ClassicButton>
            </div>
          </div>
        </div>
        <div className="flex justify-end gap-[9px] mt-[3px] pr-[5px]">
          <ClassicButton>ОК</ClassicButton>
          <ClassicButton>Отмена</ClassicButton>
        </div>
      </div>
    </div>
  )
}

export default function App() {
  return (
    <div className={`${ui} relative w-[1440px] h-[900px] overflow-hidden bg-white flex flex-col`}>
      <div className="h-[22px] flex items-center relative text-[#8a8d92] shrink-0">
        <div className="flex items-center pl-[1px]">
          <ExcelLogo />
          <div className="w-px h-[13px] bg-[#888] ml-[3px]" />
          <div className="ml-[7px]"><SaveIcon /></div>
          <div className="ml-[7px] flex items-center gap-[3px]"><UndoIcon /><Caret color="#b5b5b5" /></div>
          <div className="ml-[9px] flex items-center gap-[3px]"><UndoIcon flip /><Caret color="#b5b5b5" /></div>
          <div className="w-px h-[13px] bg-[#888] ml-[6px]" />
          <div className="ml-[5px] flex flex-col items-center gap-[1px]">
            <div className="w-[6px] h-px bg-[#333]" />
            <Caret color="#333" />
          </div>
        </div>
        <span className="absolute left-[593px] top-[5px] whitespace-pre">Лаб_2  [Режим совместимости]  -  Microsoft Excel</span>
        <div className="absolute right-[3px] top-[3px]"><WindowBtns gap="gap-[7px]" /></div>
      </div>

      <div className="h-[25px] flex items-end relative text-[#333] shrink-0">
        <div className="w-[56px] h-[22px] ml-[1px] rounded-t-[3px] bg-gradient-to-b from-[#3fa34d] to-[#0e6b21] text-white flex items-center justify-center">Файл</div>
        <div className="w-[67px] h-[24px] ml-[4px] border border-b-0 border-[#b8b8b8] rounded-t-[3px] bg-white flex items-center justify-center relative top-px z-10">Главная</div>
        <span className="ml-[15px] mb-[3px]">Вставка</span>
        <span className="ml-[27px] mb-[3px]">Разметка страницы</span>
        <span className="ml-[26px] mb-[3px]">Формулы</span>
        <span className="ml-[28px] mb-[3px]">Данные</span>
        <span className="ml-[29px] mb-[3px]">Рецензирование</span>
        <span className="ml-[31px] mb-[3px]">Вид</span>
        <div className="absolute right-[5px] top-[5px] flex items-center">
          <svg width="10" height="8" viewBox="0 0 10 8"><path d="M1 7l4-4 4 4M2 4l3-3 3 3" stroke="#555" fill="none" /></svg>
          <div className="w-[16px] h-[16px] ml-[10px] mr-[9px] rounded-full bg-[#3b76c9] text-white font-bold text-[12px] flex items-center justify-center">?</div>
          <WindowBtns gap="gap-[10px]" />
        </div>
      </div>

      <div className="shrink-0"><Ribbon /></div>
      <div className="h-px bg-[#aaacb2] shrink-0" />
      <FormulaBar />
      <div className="h-[4px] bg-[#e1e5ee] border-b border-[#a9abb2] shrink-0" />

      <div className="flex h-[656px] shrink-0 relative overflow-hidden">
        <div className="w-[1421px] shrink-0 overflow-hidden">
          <SheetTable />
        </div>
        <VScroll />
        <div className="absolute left-[304px] top-[129px] w-[65px] h-[69px] border-2 border-white border-b-[#e8432c] pointer-events-none" />
        <div className="absolute left-[365px] top-[195px] w-[6px] h-[5px] rounded-full bg-white border border-[#c43a24]" />
      </div>

      <SheetTabs />
      <StatusBar />
      <Taskbar />
      <Dialog />
    </div>
  )
}
